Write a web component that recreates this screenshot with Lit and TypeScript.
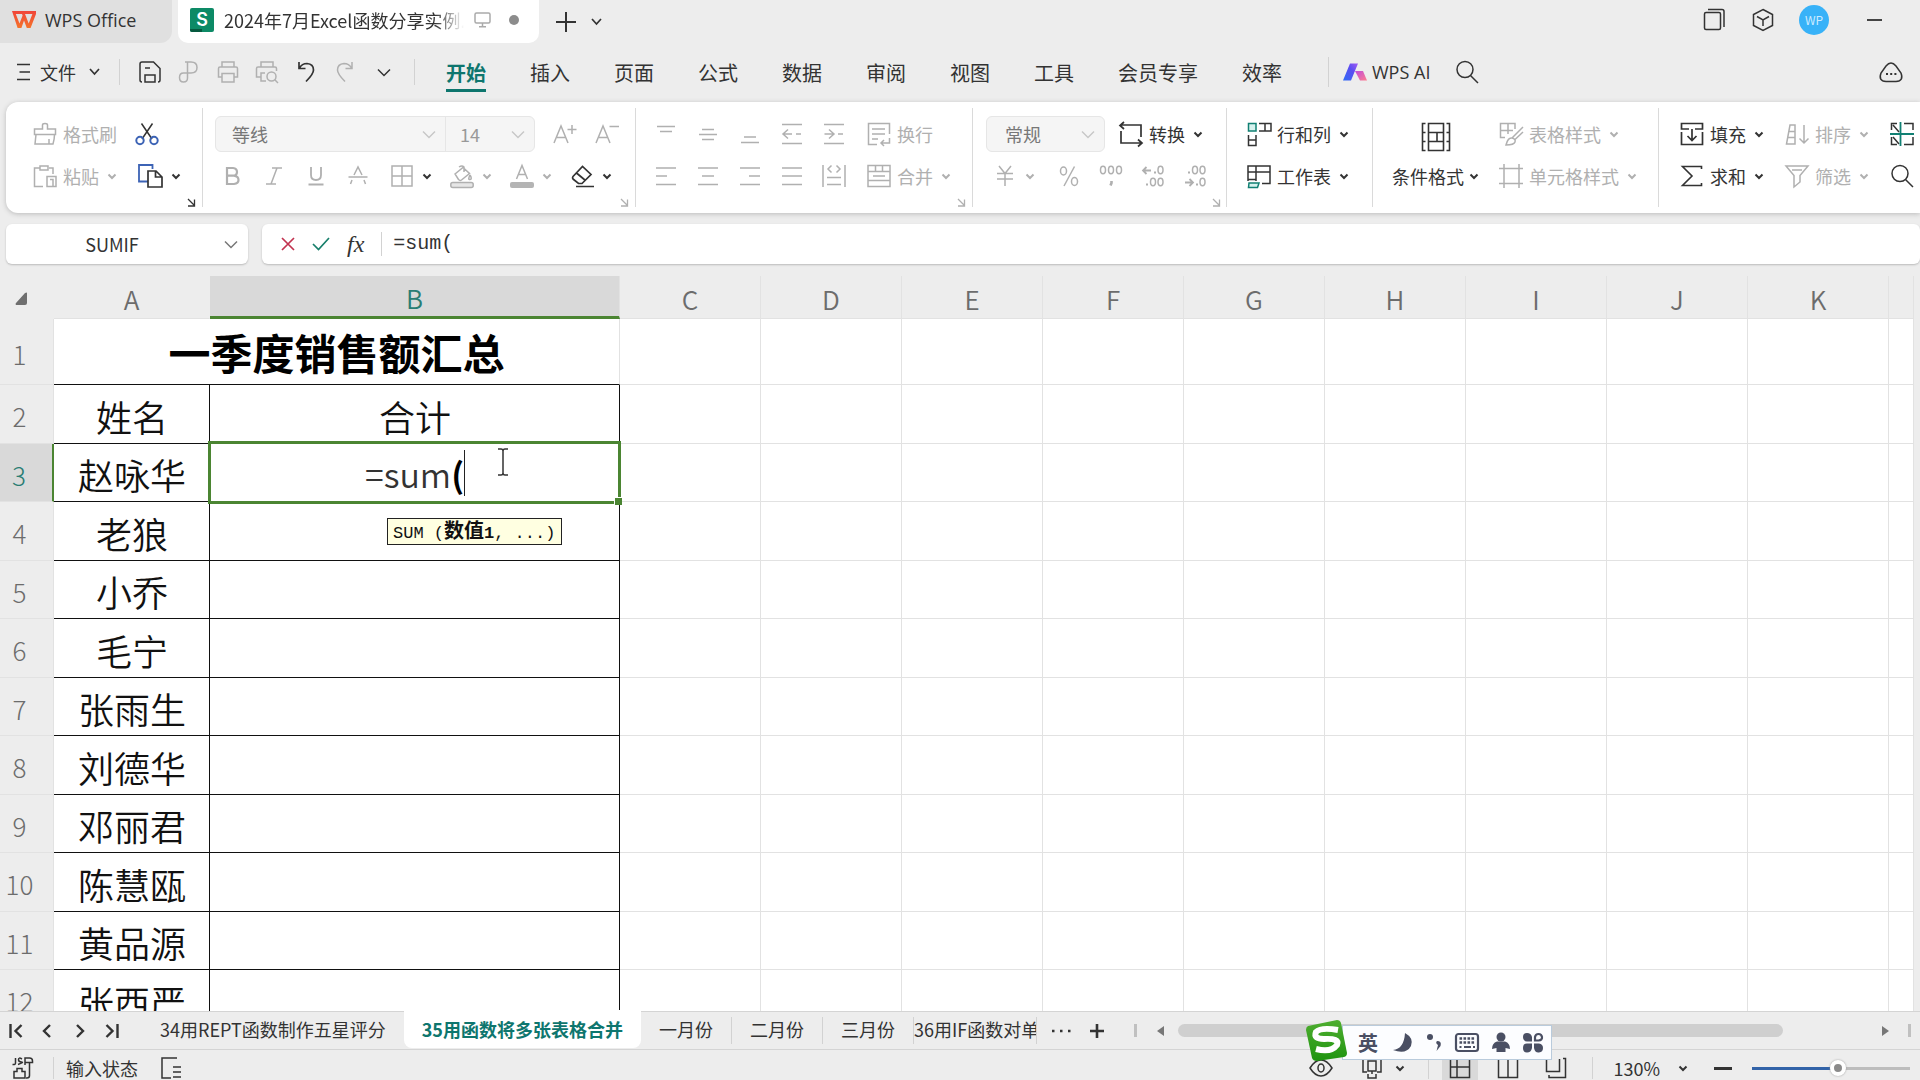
import { LitElement, html, svg, css, nothing } from "lit";
import { customElement, state } from "lit/decorators.js";
import { classMap } from "lit/directives/class-map.js";

type Shape = ReturnType<typeof svg>;

const icon = (shape: Shape, w = 24, h = 24, cls = "") =>
  html`<svg class="ic ${cls}" width=${w} height=${h} viewBox="0 0 ${w} ${h}" aria-hidden="true">${shape}</svg>`;

const chev = (cls = "") => icon(svg`<path d="M1.5 1.5 5 5 8.5 1.5" stroke-width="2"/>`, 10, 7, cls);
const midChev = (cls = "") => icon(svg`<path d="M1 1 5.500 6 10 1" stroke-width="1.700"/>`, 11, 8, cls);
const thinChev = (cls = "") => icon(svg`<path d="M1 1.5 7 7.5 13 1.5"/>`, 14, 9, cls);

const I = {
  wps: svg`<defs><linearGradient id="wg" x1="0" y1="0" x2="0" y2="1"><stop offset="0" stop-color="#f0453a"/><stop offset="1" stop-color="#f5742b"/></linearGradient></defs>
    <path d="M0 3H24V6L18.600 20H14.800L12 12.500 9.400 20H5.600ZM3.800 6 7.500 15.500 10.600 7.500 10 6ZM13 6 16.700 15.500 20.400 6Z" fill="url(#wg)" fill-rule="evenodd" stroke="none"/>`,
  sheetLogo: svg`<path d="M2 0H22Q24 0 24 2V22Q24 24 22 24H2Q0 24 0 22V2Q0 0 2 0Z" fill="#0d8a66" stroke="none"/><path d="M0 21H12V24H2Q0 24 0 22Z" fill="#06593f" stroke="none"/>
    <text x="12" y="17.500" text-anchor="middle" font-family="Inter, sans-serif" font-size="18" font-weight="600" fill="#fff" stroke="none">S</text>`,
  monitor: svg`<rect x="1" y="1" width="15" height="10" rx="1.500"/><path d="M8.500 11v3.500M5 14.800h7"/>`,
  plus: svg`<path d="M10 0V20M0 10H20" stroke-width="2"/>`,
  restore: svg`<rect x="1.500" y="4.500" width="16" height="17" rx="1.500"/><path d="M5 1.500H19Q21 1.500 21 3.500V19" />`,
  cube: svg`<path d="M12 1.500 21.500 6.500V17.500L12 22.500 2.500 17.500V6.500ZM6 8.500 12 12 18 8.500M12 12V18"/>`,
  burger: svg`<path d="M1 1.500H14M3.500 9H14M1 16.500H14"/>`,
  save: svg`<path d="M4 22Q2 22 2 20V4Q2 2 4 2H15.500L22 8.500V20Q22 22 20 22M7 8H12M7 22V15H17V22Z"/>`,
  share: svg`<path d="M8 2H14Q20 2 20 7.500T14 13H6.500Q2.500 13 2.500 17.500T6.500 22 10.500 18V2"/>`,
  print: svg`<path d="M6 7V2H18V7M6 17H2.500V8.500Q2.500 7 4 7H20Q21.500 7 21.500 8.500V17H18M6 13.500H18V22H6Z"/>`,
  preview: svg`<path d="M6 7V2H18V7M6 17H1.500V8.500Q1.500 7 3 7H20Q21.500 7 21.500 8.500V11M11 21H6V13H10"/><circle cx="16.500" cy="16.500" r="4.500"/><path d="M19.800 19.800 23 23"/>`,
  undo: svg`<path d="M5 2V8.500H11.500M5.500 8Q8 3.500 13 3.500 19.500 4 19.500 10 19.500 14 12 21.500" stroke-width="1.700"/>`,
  redo: svg`<path d="M19 2V8.500H12.500M18.500 8Q16 3.500 11 3.500 4.500 4 4.500 10 4.500 14 12 21.500"/>`,
  ai: svg`<defs><linearGradient id="ab" x1="0" y1="1" x2="1" y2="0"><stop offset="0" stop-color="#2e6cf6"/><stop offset=".6" stop-color="#5b4df0"/><stop offset="1" stop-color="#a25cf5"/></linearGradient><linearGradient id="ap" x1="0" y1="0" x2="1" y2="1"><stop offset="0" stop-color="#c04bdc"/><stop offset="1" stop-color="#ff7d8e"/></linearGradient></defs>
    <path d="M7 3.500H15L8 20.500H0Z" fill="url(#ab)" stroke="none"/><path d="M12 11H20L24 20.500H17Z" fill="url(#ap)" stroke="none"/>`,
  search: svg`<circle cx="10" cy="9.500" r="8"/><path d="M15.500 15.500 23 23"/>`,
  cloud: svg`<path d="M7 6Q12 0 17 6L22 13Q25 21 17 21.500H7Q-1 21 2 13Z"/><path d="M7 14h2M11.200 14h2M15.400 14h2" stroke-width="2.200"/>`,
  brush: svg`<path d="M9.500 7V3Q9.500 1.500 12 1.500T14.500 3V7H22.500V12.500H1.500V7ZM3 12.500 2 22H20Q21.500 17 21.500 12.500M16 17V22"/>`,
  cut: svg`<path d="M6.500 1.500 17 17M17.500 1.500 7 17"/><g stroke="#3c63b5" stroke-width="2"><circle cx="5" cy="18.500" r="3.700"/><circle cx="19" cy="18.500" r="3.700"/></g>`,
  paste: svg`<path d="M7 4H1.500V22.500H10M16 4H20V10M7 2H15V6H7ZM14 12.500H23V22.500H14ZM17 15.500H20V22.500H17"/>`,
  copy: svg`<path d="M11 17.500H2V1H15.500V5" stroke="#3c63b5" stroke-width="1.800"/><path d="M11 7H19L25 13V23H11ZM18.500 7V13H25" stroke-width="1.700"/>`,
  aUp: svg`<path d="M1 21 8 4 15 21M4 15.500H12.500M14.500 7.500H23.500M19 3V12"/>`,
  aDown: svg`<path d="M1 21 8 4 15 21M4 15.500H12.500M14.500 4.500H24"/>`,
  bold: svg`<path d="M7 4H13Q17 4.500 17 8T13 11.700H7ZM7 11.700H14Q18.500 12.500 18.500 16T14 20H7Z" stroke-width="2.200"/>`,
  italic: svg`<path d="M10 4H20M4 20H14M15 4 9 20"/>`,
  underline: svg`<path d="M7 3V11Q7 16 12 16T17 11V3M4.500 20.500H19.500" stroke-width="1.800"/>`,
  strike: svg`<path d="M8 11 12 3 16 11M2.500 13H21.500M6 16 4.500 20M18 16 19.500 20"/>`,
  borders: svg`<rect x="2" y="2" width="20" height="20"/><path d="M12 2V22M2 12H22"/>`,
  fill: svg`<path d="M5 10 13 3.500 19.500 9.500 11.500 16Q10 17 8.500 15.500ZM9 3Q12 1 14 3V8M20 11Q22.500 15 20 15.500T20 11"/><rect x=".8" y="18.500" width="22.400" height="5" rx="2" fill="#e6e6e6"/>`,
  fontColor: svg`<path d="M6.500 15 12 1.500 17.500 15M8.500 10.500H15.500"/><rect x="0" y="18" width="24" height="6" rx="2" fill="#b4b4b4" stroke="none"/>`,
  eraser: svg`<path d="M3 12.500 12.500 2.500 21 10.500 12 19.500H8.500L3 15Q2 14 3 12.500ZM6.500 9 15.500 16.500M6 22.500H24" stroke-width="1.700"/>`,
  top: svg`<path d="M3 4.500H21M6 9.500H18"/>`,
  middle: svg`<path d="M6 7.500H18M3 12.500H21M6 17.500H18"/>`,
  bottom: svg`<path d="M6 15H18M3 20.500H21"/>`,
  outdent: svg`<path d="M2 2.500H22M2 21.500H22M2.500 12H12M8 7.500 3 12 8 16.500M16 12H21"/>`,
  indent: svg`<path d="M2 2.500H22M2 21.500H22M2.500 12H12M7 7.500 12 12 7 16.500M16 12H21"/>`,
  left: svg`<path d="M2 4H22M2 12H13M2 20.500H22"/>`,
  center: svg`<path d="M2 4H22M6 12H18M2 20.500H22"/>`,
  right: svg`<path d="M2 4H22M11 12H22M2 20.500H22"/>`,
  justify: svg`<path d="M2 4H22M2 12H22M2 20.500H22"/>`,
  distribute: svg`<path d="M1 1V23M23 1V23M5 13.500H19M5 20.500H19M9.500 1.500 6 5 9.500 8.500M14.500 1.500 18 5 14.500 8.500"/>`,
  wrap: svg`<path d="M10 22.500H1.500V1.500H22.500V12M5 7H18M5 12H18M5 17H11M22.500 16V21H14M17 18 14 21 17 24"/>`,
  merge: svg`<rect x="1" y="1.500" width="22" height="21"/><path d="M1 7.500H23M1 16.500H23M8.500 1.500V7.500M15.500 1.500V7.500M6 12H18"/>`,
  convert: svg`<path d="M22 15V3H1M5 0 1 3.500 5 7M2 9V21H23M19 17.500 23 21 19 24.500" stroke-width="1.700"/>`,
  yen: svg`<path d="M6 2 12 9.500 18 2M4 9.500H20M4 15H20M12 9.500V22"/>`,
  percent: svg`<ellipse cx="6.500" cy="7" rx="3" ry="4"/><ellipse cx="17.500" cy="17.500" rx="3" ry="4"/><path d="M17.500 2.500 7 22"/>`,
  thousands: svg`<ellipse cx="4" cy="6" rx="2.500" ry="3.700"/><ellipse cx="12" cy="6" rx="2.500" ry="3.700"/><ellipse cx="20" cy="6" rx="2.500" ry="3.700"/><path d="M12.500 17V19L11.500 21.500" stroke-width="2.600"/>`,
  decAdd: svg`<path d="M2 6.500H10M5.500 3 2 6.500 5.500 10M13 8.500h2M5 20.500h2" stroke-width="1.800"/><ellipse cx="19.500" cy="6" rx="2.500" ry="3.700"/><ellipse cx="12" cy="18" rx="2.500" ry="3.700"/><ellipse cx="19.500" cy="18" rx="2.500" ry="3.700"/>`,
  decSub: svg`<path d="M2 18.500H10M6.500 15 10 18.500 6.500 22M13 20.500h2M5 8.500h2" stroke-width="1.800"/><ellipse cx="12" cy="6" rx="2.500" ry="3.700"/><ellipse cx="19.500" cy="6" rx="2.500" ry="3.700"/><ellipse cx="19.500" cy="18" rx="2.500" ry="3.700"/>`,
  rowsCols: svg`<path d="M12 1.500H24V9H12M18 1.500V9M1.500 13V23.500H9V13M1.500 18H9"/><rect x="1.500" y="1.500" width="7.500" height="7.500" stroke="#118073" fill="#d6f2ee"/>`,
  worksheet: svg`<path d="M1 17V2H23V19.500H15M1 8H23M9 2V17M1 15.500H9"/><path d="M2 19H12L10.500 23.500H1.500Z" stroke="#118073" fill="#d6f2ee"/>`,
  condFormat: svg`<path d="M4.500 1.500H1.500V28.500H4.500M25.500 1.500H28.500V28.500H25.500M7.500 1.500H22.500V28.500H7.500ZM7.500 10.500H22.500M7.500 19.500H22.500M16 10.500V19.500M1.500 10.500H4.500M1.500 19.500H4.500M25.500 10.500H28.500M25.500 19.500H28.500" stroke-width="1.600"/>`,
  tableStyle: svg`<path d="M6 15.500H1.500V1.500H16V7M1.500 8.500H14M9 1.500V12M24 5 13.500 15.500M24 10 16 17.500M7 23Q9 15 13 16T16 20 7 23Z"/>`,
  cellStyle: svg`<path d="M5 0V24M20 0V24M0 4.500H24M0 19.500H24"/>`,
  fillDown: svg`<path d="M9 7H1.500V1.500H22.500V7H15M1.500 10V22.500H22.500V10M12 7V18M7.500 14 12 18.500 16.500 14" stroke-width="1.700"/>`,
  sum: svg`<path d="M21.500 5V2.500H2.500L12 12 2.500 21.500H21.500V19" stroke-width="1.600"/>`,
  sort: svg`<path d="M1.500 22 5 3H10V22ZM4 9.500H10M3 15.500H10M19 3V21M14.500 16.500 19 21 23.500 16.500"/>`,
  filter: svg`<path d="M1 2H23L15 11.500V18L9 23V11.500L1 2ZM7 6H17"/>`,
  freeze: svg`<path d="M7 1.500H1.500V8M14 1.500H23V8M1.500 15V22.500H7M14 22.500H23V15M3 3 9 10M3 15 9 22"/><path d="M10.500 0V24M0 12H24" stroke="#118073" stroke-width="1.800"/>`,
  launch: svg`<path d="M1 1 7 7M7.500 1.500V8H1" stroke-width="1.300"/>`,
  cross: svg`<path d="M1 1 13 13M13 1 1 13" stroke="#c23350" stroke-width="1.700"/>`,
  tick: svg`<path d="M1 8 6.500 13.500 17 2" stroke="#177f6b" stroke-width="1.700"/>`,
  first: svg`<path d="M1.500 1V15M12.500 2 6.500 8 12.500 14" stroke-width="2.400"/>`,
  prev: svg`<path d="M9 2 3 8 9 14" stroke-width="2.400"/>`,
  next: svg`<path d="M4 2 10 8 4 14" stroke-width="2.400"/>`,
  last: svg`<path d="M1.500 2 7.500 8 1.500 14M12.500 1V15" stroke-width="2.400"/>`,
  add: svg`<path d="M8 1V15M1 8H15" stroke-width="2.600"/>`,
  dots: svg`<path d="M1 2h2.500M9 2h2.500M17 2h2.500" stroke-width="2.500"/>`,
  triLeft: svg`<path d="M8 0V10L1 5Z" fill="#777" stroke="none"/>`,
  triRight: svg`<path d="M1 0V10L8 5Z" fill="#777" stroke="none"/>`,
  corner: svg`<path d="M12 1V11Q12 13 10 13H1Q0 12 1 11L10 1Q12 0 12 1Z" fill="#6f6f6f" stroke="none"/>`,
  script: svg`<path d="M4.500 1V6Q4.500 8 1.500 7.500M11 2Q7.500 0 7.500 2.500T10.500 5 7 7.500M14 8V1H18.500Q21.500 1 21.500 4V5.500H14M18.500 5.500V18.500Q18.500 21 16 21H15M3 21V14.500H6V11.500H11V14.500H14V21Z"/>`,
  outline: svg`<path d="M17 1H2V21H9M9 21H11M13 10H21M13 15H21M13 20H21"/>`,
  eye: svg`<path d="M1 12Q6 4 12 4T23 12Q18 20 12 20T1 12Z"/><ellipse cx="12" cy="12" rx="3" ry="4"/>`,
  focus: svg`<path d="M6 3H2V16H6M16 3H20V16H16M7 5H15V15H7ZM7 18V22H15V18M11 15V18"/>`,
  viewNormal: svg`<rect x="1.500" y="1.500" width="19" height="19"/><path d="M1.500 10H20.500M8 1.500V20.500"/>`,
  viewPage: svg`<path d="M1.500 2V20.500H20.500V2M11 2V20.500"/>`,
  viewBreak: svg`<path d="M1.500 2V14.500H14.500V2M18 1.500H20.500V20.500H4V18"/>`,
  sogou: svg`<defs><linearGradient id="sg" x1="0" y1="0" x2="0" y2="1"><stop offset="0" stop-color="#4fae30"/><stop offset="1" stop-color="#1f9410"/></linearGradient></defs>
    <path d="M3 7 32 1Q35 1 36 4L42 34Q42 37 39 38L12 42Q8 42 7 39L1 11Q1 8 3 7Z" fill="url(#sg)" stroke="none"/>
    <path d="M33 11Q16 8 11 13 8 20 19 20 35 19 32 26 26 34 11 30" stroke="#fff" stroke-width="6"/>`,
  moon: svg`<path d="M14 1Q23 6 20 14 15 23 2 18 13 17 14 1Z" fill="#4a4f63" stroke="none"/>`,
  punct: svg`<circle cx="4" cy="5" r="3" fill="#4a4f63" stroke="none"/><path d="M11 9Q16 9 14.500 14L10.500 19 12 13Q9 11 11 9Z" fill="#4a4f63" stroke="none"/>`,
  keyboard: svg`<rect x="1" y="1" width="22" height="17" rx="2.500" stroke="#4a4f63" stroke-width="2.200"/><path d="M4.500 5.500H20M4.500 9.500H20" stroke="#4a4f63" stroke-width="2.400" stroke-dasharray="2.600 1.400"/><path d="M4.500 14H6.500M9 14H16M18 14H20" stroke="#4a4f63" stroke-width="2.200"/>`,
  person: svg`<circle cx="9" cy="5" r="4.500" fill="#4a4f63" stroke="none"/><path d="M5 9.500H13Q18 11 18 17L13.500 16V20H4.500V16L0 17Q0 11 5 9.500Z" fill="#4a4f63" stroke="none"/>`,
  clover: svg`<path d="M9 9.500H4Q0 9 0 5T4 1 9 5ZM9 11.500V16Q8 20.500 4 20.500T0 16 4 11.500ZM11 11.500H16Q20 12 20 16T16 20.500 11 16Z" fill="#4a4f63" stroke="none"/><path d="M12 8.500V5Q12.500 2 15.500 2T19 5 15.500 8.500Z" stroke="#4a4f63" stroke-width="2.200"/>`,
};

const MENU = ["开始", "插入", "页面", "公式", "数据", "审阅", "视图", "工具", "会员专享", "效率"];
const COLS = ["A", "B", "C", "D", "E", "F", "G", "H", "I", "J", "K", ""];
const NAMES = ["姓名", "赵咏华", "老狼", "小乔", "毛宁", "张雨生", "刘德华", "邓丽君", "陈慧瓯", "黄品源", "张西严"];
const SHEETS = ["34用REPT函数制作五星评分", "35用函数将多张表格合并", "一月份", "二月份", "三月份", "36用IF函数对单"];

@customElement("app-root")
export class AppRoot extends LitElement {
  @state() private menu = 0;
  @state() private sheet = 1;

  static styles = css`
    :host {
      display: flex;
      flex-direction: column;
      position: relative;
      height: 100vh;
      overflow: hidden;
      background: #ededed;
      color: #333;
      font: 18px/24px "Noto Sans CJK SC", sans-serif;
    }
    * { box-sizing: border-box; }
    button, input, select { font: inherit; color: inherit; border: 0; background: none; padding: 0; margin: 0; outline: none; }
    button { display: inline-flex; align-items: center; white-space: nowrap; flex: none; }
    button:disabled { color: #b0b0b0; }
    .ic { display: block; flex: none; fill: none; stroke: currentColor; stroke-width: 1.5; overflow: visible; }
    .row { display: flex; align-items: center; }
    .latin { font-family: "Open Sans", "Noto Sans CJK SC", sans-serif; }
    .vr { width: 1px; height: 26px; background: #d2d2d2; flex: none; }
    .spacer { flex: 1; }

    .titlebar { display: flex; height: 43px; align-items: center; flex: none; }
    .app-tab { height: 43px; width: 172px; padding: 0 0 3px 12px; gap: 9px; background: #e0e0e0; border-radius: 0 0 12px 0; }
    .doc-tab { display: flex; height: 43px; width: 361px; margin-left: 6px; padding: 0 20px 3px 12px; align-items: center; background: #fff; border-radius: 0 0 10px 10px; }
    .doc-name { margin-left: 10px; width: 240px; overflow: hidden; white-space: nowrap; -webkit-mask-image: linear-gradient(90deg, #000 88%, transparent); }
    .doc-tab .monitor { margin-left: 10px; color: #aaa; }
    .dot { width: 10px; height: 10px; border-radius: 5px; background: #8c8c8c; margin-left: auto; }
    .new-tab { margin: 0 15px 0 17px; }
    .window { display: flex; align-items: center; gap: 24px; padding: 0 38px 4px 0; }
    .avatar { width: 30px; height: 30px; border-radius: 15px; background: #38b2f8; color: #cdebff; font-size: 12px; line-height: 30px; text-align: center; }
    .minus { width: 15px; height: 2px; background: #444; margin-left: 14px; }

    .menubar { display: flex; height: 58px; align-items: center; flex: none; padding-left: 16px; margin-bottom: 1px; }
    .file { gap: 9px; margin-right: 19px; }
    .file .chev { margin-left: 4px; }
    .quick { display: flex; gap: 15px; padding: 0 23px 0 18px; align-items: center; }
    .quick .more { margin-left: 5px; }
    .menus { display: flex; gap: 44px; padding-left: 31px; font-size: 20px; }
    .menus button { height: 40px; align-items: flex-end; border-bottom: 3px solid transparent; line-height: 32px; }
    .menus .on { color: #0e766e; font-weight: 700; border-color: #0e766e; }
    .ai { gap: 5px; padding-left: 14px; margin-right: 25px; }
    .menubar .tall { height: 30px; margin-left: 46px; }
    .menubar .cloud { margin-right: 17px; }

    .ribbon { display: flex; flex: none; height: 111px; margin-left: 6px; padding: 6px 0; background: #fff; border-radius: 12px 0 0 12px; box-shadow: 0 1px 5px #bbb; overflow-x: clip; overflow-y: visible; }
    .group { display: flex; flex: none; justify-content: space-between; border-right: 1px solid #dadada; }
    .group:last-child { border: 0; }
    .rows { display: flex; flex-direction: column; gap: 6px; padding-top: 8px; }
    .rows > .row { height: 36px; gap: 18px; }
    .g1 { width: 197px; padding-left: 27px; }
    .g2 { width: 433px; padding-left: 12px; }
    .g3 { width: 337px; padding-left: 13px; }
    .g4 { width: 254px; padding-left: 13px; }
    .g5 { width: 146px; padding-left: 20px; }
    .g6 { width: 286px; padding-left: 19px; justify-content: flex-start; gap: 20px; }
    .g7 { padding-left: 21px; }
    .rows > .row.tight, .tight { gap: 8px; }
    .rows > .row.mid { gap: 14px; }
    .g7 .row { gap: 21px; }
    .labelled { gap: 6px; }
    .labelled .chev { margin-left: 2px; }
    .inset { padding-left: 8px; }
    .icon-btn { width: 34px; justify-content: center; }
    .drop { gap: 8px; padding: 0 3px 0 7px; }
    .drop .dark { color: #333; }
    .copy { gap: 8px; padding-left: 2px; }
    .launcher { align-self: flex-end; margin-right: 6px; }
    .combo { display: flex; height: 36px; background: #f5f5f5; border: 1px solid #e6e6e6; border-radius: 6px; color: #777; }
    .combo label { display: grid; grid-template-columns: 1fr auto; align-items: center; padding-right: 9px; }
    .combo label + label { border-left: 1px solid #e6e6e6; }
    .combo select { appearance: none; opacity: 1; grid-area: 1 / 1 / 2 / 3; width: 100%; padding-left: 16px; }
    .combo .size select { padding-left: 14px; color: #999; }
    .combo .ic { grid-area: 1 / 2; color: #c8c8c8; }
    .font { width: 229px; }
    .size { width: 89px; }
    .format { width: 117px; }
    .combo .format select { padding-left: 18px; }
    .big { flex-direction: column; padding-top: 14px; justify-content: flex-start; gap: 12px; }
    .big span { display: flex; align-items: center; gap: 5px; }

    .formula { display: flex; flex: none; gap: 14px; padding-left: 6px; margin: 11px 0 12px; height: 40px; }
    .box { display: flex; align-items: center; background: #fff; border-radius: 6px; box-shadow: 0 1px 2px #bbb; }
    .namebox { width: 242px; padding-right: 10px; }
    .namebox input { flex: 1; min-width: 0; text-align: center; padding-right: 6px; }
    .namebox .ic { color: #777; }
    .fbar { flex: 1; padding-left: 19px; gap: 17px; }
    .fbar .vr { height: 24px; }
    .fx { font: italic 24px/24px "Liberation Serif", serif; color: #333; }
    .fbar input { flex: 1; font: 20px/24px "Liberation Mono", monospace; margin-left: -6px; }

    .sheet { flex: 1; min-height: 0; overflow: hidden; margin-right: 6px; background: #fff; }
    table { width: 100%; table-layout: fixed; border-collapse: separate; border-spacing: 0; }
    .c-head { width: 54px; }
    .c-a { width: 156px; }
    .c-b { width: 410px; }
    .c-n { width: 141px; }
    th, td { padding: 0; font-weight: 400; border: 0 solid #e2e2e2; border-width: 0 1px 1px 0; }
    th { background: #ededed; color: #6c6c6c; font-size: 26px; font-weight: 350; line-height: 34px; }
    thead th { height: 43px; padding-top: 4px; }
    thead th:nth-child(2) { border-right-color: #ededed; }
    thead th.sel { background: #d9d9d9; color: #2a7d74; border-bottom: 3px solid #4b8532; }
    thead th:first-child { border-color: #ededed; }
    thead .ic { margin: -1px 0 0 15px; }
    tbody th { padding: 4px 14px 0 0; font-weight: 300; }
    tbody th.sel { background: #d9d9d9; color: #2a7d74; border-right: 2px solid #4b8532; }
    tbody tr { height: 58px; }
    tbody tr:nth-child(even) { height: 59px; }
    tbody tr:first-child { height: 66px; }
    td { text-align: center; font-size: 36px; line-height: 44px; color: #111; }
    td.ink { border-color: #111; padding: 3px 0 0 1px; font-weight: 350; }
    td.title { font-size: 42px; line-height: 52px; font-weight: 700; border-bottom-color: #111; color: #000; }
    td.edit { position: relative; color: #333; font-size: 34px; }
    td.edit::before { content: ""; position: absolute; inset: -3px -2px -3px -2px; border: 3px solid #4b8532; }
    td.edit::after { content: ""; position: absolute; right: -3px; bottom: -4px; width: 7px; height: 7px; background: #4b8532; border: solid #fff; border-width: 1px 0 0 1px; }
    .edit b { color: #000; font-weight: 700; }
    .caret { display: inline-block; width: 1px; height: 46px; background: #222; vertical-align: -8px; margin-top: -12px; }
    .tip { position: absolute; z-index: 2; left: 177px; top: 74px; height: 27px; padding: 0 6px 0 5px; border: 1px solid #222; background: #ffffe1; color: #111; white-space: nowrap; font: 17px/24px "Liberation Mono", "Noto Sans CJK SC", monospace; }
    .tip .cjk { font: 700 20px/22px "Noto Sans CJK SC", sans-serif; }
    .mouse { position: absolute; z-index: 2; left: 287px; top: 4px; }

    .tabs { display: flex; flex: none; height: 39px; align-items: center; border-top: 1px solid #d4d4d4; border-bottom: 1px solid #d4d4d4; padding-left: 9px; }
    .nav { display: flex; gap: 18px; align-items: center; width: 133px; }
    .tab { height: 100%; padding: 0 18px 3px; position: relative; }
    .tab.on { background: #fff; color: #0e766e; font-weight: 700; border-radius: 0 0 8px 8px; height: 38px; margin-top: -3px; padding: 0 18px; }
    .tabs .vr { height: 27px; }
    .tab.cut { width: 122px; padding: 0 0 3px; overflow: hidden; }
    .tabs .dots { margin: 0 18px 0 14px; }
    .grip { width: 3px; height: 13px; background: #c0c0c0; flex: none; }
    .tabs .arrow-l { margin: 0 13px 0 19px; }
    .hscroll { flex: 1; padding-right: 98px; }
    .thumb { height: 13px; border-radius: 7px; background: #cfcfcf; }
    .tabs .arrow-r { margin-right: 18px; }
    .tabs .end { margin-right: 9px; }
    .tabs .add { margin-right: 29px; }

    .status { display: flex; flex: none; height: 30px; padding: 6px 10px 0 11px; align-items: center; overflow: hidden; }
    .status > * { flex: none; }
    .status .vr { height: 22px; }
    .status .spacer { flex: 1; }
    .state { margin: 0 22px 0 12px; }
    .status .vr.a { margin-left: 19px; }
    .views { display: flex; gap: 12px; padding: 0 18px 0 13px; }
    .views button { width: 36px; height: 30px; justify-content: center; }
    .views .on { background: #d9d9d9; }
    .eye { margin-right: 28px; }
    .focus { gap: 12px; margin-right: 23px; }
    .zoom { gap: 18px; padding-left: 20px; }
    .less { width: 18px; height: 3px; background: #333; margin: 0 20px 0 26px; }
    input[type="range"] { appearance: none; width: 158px; height: 20px; background: linear-gradient(90deg, #3263a8 55%, #bdbdbd 55%) center / 100% 3px no-repeat; }
    input[type="range"]::-webkit-slider-thumb { appearance: none; width: 16px; height: 16px; border-radius: 8px; background: #8a8a8a; border: 4px solid #fff; box-shadow: 0 0 2px #999; }

    .ime { position: absolute; right: 368px; bottom: 14px; display: flex; align-items: center; }
    .ime-bar { display: flex; align-items: center; justify-content: space-between; height: 35px; width: 210px; margin-left: -6px; padding: 0 8px 0 15px; background: #fcfdff; border: 1px solid #b9cbdc; font-weight: 700; font-size: 20px; color: #4a4f63; }
    .ime > .ic { z-index: 1; margin-bottom: 4px; }
  `;

  private labelled(shape: Shape, text: string, drop = true, disabled = false, extra = "") {
    return html`<button class="labelled ${extra}" ?disabled=${disabled}>${icon(shape)}<span>${text}</span>${drop ? chev("chev") : nothing}</button>`;
  }

  private iconBtn(shape: Shape, label: string) {
    return html`<button class="icon-btn" disabled aria-label=${label}>${icon(shape)}</button>`;
  }

  private launcher(disabled = true) {
    return html`<button class="launcher" ?disabled=${disabled} aria-label="更多设置">${icon(I.launch, 9, 9)}</button>`;
  }

  private renderTitle() {
    return html`<header class="titlebar">
      <button class="app-tab latin">${icon(I.wps, 24, 24)}WPS Office</button>
      <div class="doc-tab">
        ${icon(I.sheetLogo)}<span class="doc-name">2024年7月Excel函数分享实例.</span>
        ${icon(I.monitor, 17, 16, "monitor")}<span class="dot"></span>
      </div>
      <button class="new-tab" aria-label="新建">${icon(I.plus, 20, 20)}</button>
      <button aria-label="标签列表">${midChev()}</button>
      <span class="spacer"></span>
      <div class="window">
        <button aria-label="窗口">${icon(I.restore)}</button>
        <button aria-label="应用">${icon(I.cube)}</button>
        <button class="avatar" aria-label="账号"><span class="spacer">WP</span></button>
        <button class="minus" aria-label="最小化"></button>
      </div>
    </header>`;
  }

  private renderMenu() {
    return html`<nav class="menubar">
      <button class="file">${icon(I.burger, 15, 18)}文件${midChev("chev")}</button>
      <span class="vr"></span>
      <div class="quick">
        <button aria-label="保存">${icon(I.save)}</button>
        <button disabled aria-label="输出">${icon(I.share)}</button>
        <button disabled aria-label="打印">${icon(I.print)}</button>
        <button disabled aria-label="打印预览">${icon(I.preview)}</button>
        <button aria-label="撤销">${icon(I.undo)}</button>
        <button disabled aria-label="恢复">${icon(I.redo)}</button>
        <button class="more" aria-label="更多">${thinChev()}</button>
      </div>
      <span class="vr"></span>
      <div class="menus">
        ${MENU.map((m, i) => html`<button class=${classMap({ on: i === this.menu })} @click=${() => (this.menu = i)}>${m}</button>`)}
      </div>
      <span class="vr tall"></span>
      <button class="ai latin">${icon(I.ai)}WPS AI</button>
      <button aria-label="搜索">${icon(I.search)}</button>
      <span class="spacer"></span>
      <button class="cloud" aria-label="云状态">${icon(I.cloud)}</button>
    </nav>`;
  }

  private renderRibbon() {
    const drop = (shape: Shape, label: string, dark = false, all = false) =>
      html`<button class="drop" ?disabled=${!all} aria-label=${label}>${icon(shape)}${chev(dark ? "dark" : "")}</button>`;
    return html`<section class="ribbon">
      <div class="group g1">
        <div class="rows">
          <div class="row">${this.labelled(I.brush, "格式刷", false, true)}<button aria-label="剪切">${icon(I.cut)}</button></div>
          <div class="row">${this.labelled(I.paste, "粘贴", true, true)}<button class="copy" aria-label="复制">${icon(I.copy, 26, 24)}${chev()}</button></div>
        </div>
        ${this.launcher(false)}
      </div>
      <div class="group g2">
        <div class="rows">
          <div class="row">
            <div class="combo">
              <label class="font"><select disabled aria-label="字体"><option>等线</option></select>${thinChev()}</label>
              <label class="size"><select disabled aria-label="字号"><option>14</option></select>${thinChev()}</label>
            </div>
            <button disabled aria-label="增大字号">${icon(I.aUp)}</button>
            <button disabled aria-label="减小字号">${icon(I.aDown)}</button>
          </div>
          <div class="row tight">
            ${this.iconBtn(I.bold, "加粗")}${this.iconBtn(I.italic, "倾斜")}${this.iconBtn(I.underline, "下划线")}${this.iconBtn(I.strike, "删除线")}
            ${drop(I.borders, "边框", true)}${drop(I.fill, "填充颜色")}${drop(I.fontColor, "字体颜色")}${drop(I.eraser, "清除", true, true)}
          </div>
        </div>
        ${this.launcher()}
      </div>
      <div class="group g3">
        <div class="rows">
          <div class="row tight">
            ${this.iconBtn(I.top, "顶端对齐")}${this.iconBtn(I.middle, "垂直居中")}${this.iconBtn(I.bottom, "底端对齐")}${this.iconBtn(I.outdent, "减少缩进")}${this.iconBtn(I.indent, "增加缩进")}
            ${this.labelled(I.wrap, "换行", false, true, "inset")}
          </div>
          <div class="row tight">
            ${this.iconBtn(I.left, "左对齐")}${this.iconBtn(I.center, "水平居中")}${this.iconBtn(I.right, "右对齐")}${this.iconBtn(I.justify, "两端对齐")}${this.iconBtn(I.distribute, "分散对齐")}
            ${this.labelled(I.merge, "合并", true, true, "inset")}
          </div>
        </div>
        ${this.launcher()}
      </div>
      <div class="group g4">
        <div class="rows">
          <div class="row mid">
            <div class="combo"><label class="format"><select disabled aria-label="数字格式"><option>常规</option></select>${thinChev()}</label></div>
            ${this.labelled(I.convert, "转换")}
          </div>
          <div class="row mid">
            ${drop(I.yen, "货币")}
            <div class="row tight">
              ${this.iconBtn(I.percent, "百分比")}${this.iconBtn(I.thousands, "千位分隔")}${this.iconBtn(I.decAdd, "增加小数位")}${this.iconBtn(I.decSub, "减少小数位")}
            </div>
          </div>
        </div>
        ${this.launcher()}
      </div>
      <div class="group g5">
        <div class="rows">
          <div class="row">${this.labelled(I.rowsCols, "行和列")}</div>
          <div class="row">${this.labelled(I.worksheet, "工作表")}</div>
        </div>
      </div>
      <div class="group g6">
        <button class="big">${icon(I.condFormat, 30, 30)}<span>条件格式${chev()}</span></button>
        <div class="rows">
          <div class="row">${this.labelled(I.tableStyle, "表格样式", true, true)}</div>
          <div class="row">${this.labelled(I.cellStyle, "单元格样式", true, true)}</div>
        </div>
      </div>
      <div class="group g7">
        <div class="rows">
          <div class="row">${this.labelled(I.fillDown, "填充")}${this.labelled(I.sort, "排序", true, true)}<button aria-label="冻结">${icon(I.freeze)}</button></div>
          <div class="row">${this.labelled(I.sum, "求和")}${this.labelled(I.filter, "筛选", true, true)}<button aria-label="查找">${icon(I.search)}</button></div>
        </div>
      </div>
    </section>`;
  }

  private renderFormula() {
    return html`<section class="formula">
      <div class="box namebox"><input aria-label="名称框" value="SUMIF" /><button aria-label="名称列表">${thinChev()}</button></div>
      <div class="box fbar">
        <button aria-label="取消">${icon(I.cross, 14, 14)}</button>
        <button aria-label="输入">${icon(I.tick, 18, 16)}</button>
        <button class="fx" aria-label="插入函数">fx</button>
        <span class="vr"></span>
        <input aria-label="编辑栏" value="=sum(" />
      </div>
    </section>`;
  }

  private renderSheet() {
    const blanks = COLS.slice(2).map(() => html`<td></td>`);
    return html`<main class="sheet">
      <table>
        <colgroup>
          <col class="c-head" /><col class="c-a" /><col class="c-b" />
          ${COLS.slice(2, 11).map(() => html`<col class="c-n" />`)}<col />
        </colgroup>
        <thead>
          <tr>
            <th>${icon(I.corner, 13, 14)}</th>
            ${COLS.map((c) => html`<th class=${classMap({ sel: c === "B" })}>${c}</th>`)}
          </tr>
        </thead>
        <tbody>
          <tr><th>1</th><td class="title" colspan="2">一季度销售额汇总</td>${blanks}</tr>
          ${NAMES.map((n, i) => html`<tr>
            <th class=${classMap({ sel: i === 1 })}>${i + 2}</th>
            <td class="ink">${n}</td>
            ${i === 1
              ? html`<td class="ink edit">=sum<b>(</b><span class="caret"></span>
                  <svg class="mouse ic" width="12" height="28" viewBox="0 0 12 28"><path d="M1 1H4Q6 1 6 3V25Q6 27 4 27H1M11 1H8Q6 1 6 3M11 27H8Q6 27 6 25"/></svg>
                  <div class="tip" role="tooltip">SUM (<span class="cjk">数值</span><strong>1</strong>, ...)</div></td>`
              : html`<td class="ink">${i === 0 ? "合计" : ""}</td>`}
            ${blanks}
          </tr>`)}
        </tbody>
      </table>
    </main>`;
  }

  private renderTabs() {
    return html`<section class="tabs">
      <div class="nav">
        <button aria-label="第一个">${icon(I.first, 14, 16)}</button>
        <button aria-label="上一个">${icon(I.prev, 14, 16)}</button>
        <button aria-label="下一个">${icon(I.next, 14, 16)}</button>
        <button aria-label="最后一个">${icon(I.last, 14, 16)}</button>
      </div>
      ${SHEETS.map((s, i) => html`<button class=${classMap({ tab: true, on: i === this.sheet, cut: i === 5 })} @click=${() => (this.sheet = i)}>${s}</button>${i > 1 ? html`<span class="vr"></span>` : nothing}`)}
      <button class="dots" aria-label="更多工作表">${icon(I.dots, 20, 4)}</button>
      <button class="add" aria-label="新建工作表">${icon(I.add, 16, 16)}</button>
      <span class="grip"></span>
      <button class="arrow-l" aria-label="向左滚动">${icon(I.triLeft, 9, 10)}</button>
      <div class="hscroll"><div class="thumb"></div></div>
      <button class="arrow-r" aria-label="向右滚动">${icon(I.triRight, 9, 10)}</button>
      <span class="grip end"></span>
    </section>`;
  }

  private renderStatus() {
    return html`<footer class="status">
      <button aria-label="宏">${icon(I.script, 23, 22)}</button>
      <span class="vr a"></span>
      <span class="state">输入状态</span>
      <button aria-label="大纲">${icon(I.outline, 22, 22)}</button>
      <span class="spacer"></span>
      <button class="eye" aria-label="护眼模式">${icon(I.eye)}</button>
      <button class="focus" aria-label="阅读模式">${icon(I.focus, 22, 24)}${chev()}</button>
      <span class="vr"></span>
      <div class="views">
        <button class="on" aria-label="普通视图">${icon(I.viewNormal, 22, 22)}</button>
        <button aria-label="页面布局">${icon(I.viewPage, 22, 22)}</button>
        <button aria-label="分页预览">${icon(I.viewBreak, 22, 22)}</button>
      </div>
      <span class="vr"></span>
      <button class="zoom">130%${chev()}</button>
      <button class="less" aria-label="缩小"></button>
      <input type="range" min="10" max="210" value="120" aria-label="缩放" />
    </footer>`;
  }

  render() {
    return html`${this.renderTitle()}${this.renderMenu()}${this.renderRibbon()}${this.renderFormula()}${this.renderSheet()}${this.renderTabs()}${this.renderStatus()}
      <div class="ime">
        ${icon(I.sogou, 43, 43)}
        <div class="ime-bar"><span>英</span>${icon(I.moon, 22, 21)}${icon(I.punct, 16, 21)}${icon(I.keyboard, 24, 19)}${icon(I.person, 18, 21)}${icon(I.clover, 20, 21)}</div>
      </div>`;
  }
}
